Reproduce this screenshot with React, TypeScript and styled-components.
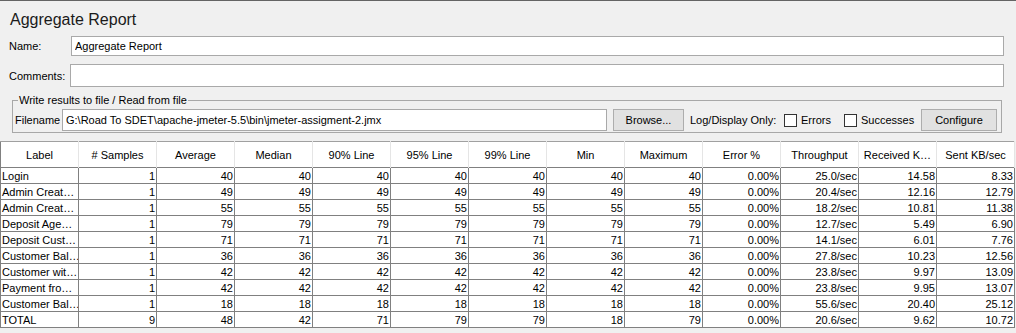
import React from 'react';
import styled, {createGlobalStyle} from 'styled-components';

const GlobalStyle = createGlobalStyle`
  html, body {
    margin: 0;
    padding: 0;
    background: #f0f0f0;
  }
  body {
    font-family: "Liberation Sans", Arial, sans-serif;
    font-size: 11px;
    color: #000;
  }
`;

const columns = [
  'Label',
  '# Samples',
  'Average',
  'Median',
  '90% Line',
  '95% Line',
  '99% Line',
  'Min',
  'Maximum',
  'Error %',
  'Throughput',
  'Received K…',
  'Sent KB/sec',
];

const rows: string[][] = [
  ['Login', '1', '40', '40', '40', '40', '40', '40', '40', '0.00%', '25.0/sec', '14.58', '8.33'],
  ['Admin Creat…', '1', '49', '49', '49', '49', '49', '49', '49', '0.00%', '20.4/sec', '12.16', '12.79'],
  ['Admin Creat…', '1', '55', '55', '55', '55', '55', '55', '55', '0.00%', '18.2/sec', '10.81', '11.38'],
  ['Deposit Age…', '1', '79', '79', '79', '79', '79', '79', '79', '0.00%', '12.7/sec', '5.49', '6.90'],
  ['Deposit Cust…', '1', '71', '71', '71', '71', '71', '71', '71', '0.00%', '14.1/sec', '6.01', '7.76'],
  ['Customer Bal…', '1', '36', '36', '36', '36', '36', '36', '36', '0.00%', '27.8/sec', '10.23', '12.56'],
  ['Customer wit…', '1', '42', '42', '42', '42', '42', '42', '42', '0.00%', '23.8/sec', '9.97', '13.09'],
  ['Payment fro…', '1', '42', '42', '42', '42', '42', '42', '42', '0.00%', '23.8/sec', '9.95', '13.07'],
  ['Customer Bal…', '1', '18', '18', '18', '18', '18', '18', '18', '0.00%', '55.6/sec', '20.40', '25.12'],
  ['TOTAL', '9', '48', '42', '71', '79', '79', '18', '79', '0.00%', '20.6/sec', '9.62', '10.72'],
];

const App = () => {
  return (
    <Page>
      <GlobalStyle />
      <Form>
        <Title>Aggregate Report</Title>
        <FieldRow>
          <Label width={62}>Name:</Label>
          <TextBox height={20} defaultValue="Aggregate Report" />
        </FieldRow>
        <FieldRow top={8}>
          <Label width={61}>Comments:</Label>
          <TextBox height={23} />
        </FieldRow>
        <FileGroup>
          <Legend>Write results to file / Read from file</Legend>
          <FileRow>
            <Label width={47}>Filename</Label>
            <TextBox height={22} defaultValue="G:\Road To SDET\apache-jmeter-5.5\bin\jmeter-assigment-2.jmx" />
            <Button width={71} left={6}>Browse...</Button>
            <InlineText width={94} left={6}>Log/Display Only:</InlineText>
            <CheckOption width={60}>
              <Box />
              Errors
            </CheckOption>
            <CheckOption width={77}>
              <Box />
              Successes
            </CheckOption>
            <Button width={76} left={0}>Configure</Button>
          </FileRow>
        </FileGroup>
      </Form>
      <Table>
        <colgroup>
          {columns.map(c => (
            <col key={c} style={{width: 78}} />
          ))}
        </colgroup>
        <thead>
          <tr>
            {columns.map(c => (
              <Th key={c}>{c}</Th>
            ))}
          </tr>
        </thead>
        <tbody>
          {rows.map((r, idx) => (
            <tr key={`${r[0]}-${idx}`}>
              {r.map((cell, i) => (
                <Td key={i} align={i === 0 ? 'left' : 'right'}>
                  {cell}
                </Td>
              ))}
            </tr>
          ))}
        </tbody>
      </Table>
    </Page>
  );
};

export default App;

const Page = styled.div`
  width: 1016px;
  height: 333px;
  border-top: 1px solid #646464;
  box-sizing: border-box;
  overflow: hidden;
`;

const Form = styled.div`
  padding: 9px 12px 0 9px;
  display: flex;
  flex-direction: column;
`;

const Title = styled.div`
  font-size: 16px;
  line-height: 20px;
  height: 20px;
  padding-left: 1px;
  color: #1a1a1a;
`;

const FieldRow = styled.div<{top?: number}>`
  display: flex;
  align-items: center;
  margin-top: ${p => p.top ?? 6}px;
`;

const Label = styled.span<{width: number}>`
  width: ${p => p.width}px;
  flex: none;
  line-height: 14px;
`;

const TextBox = styled.input<{height: number}>`
  flex: 1;
  min-width: 0;
  height: ${p => p.height}px;
  box-sizing: border-box;
  border: 1px solid #a9a9a9;
  background: #fff;
  font-family: "Liberation Sans", Arial, sans-serif;
  font-size: 11px;
  color: #000;
  padding: 0 3px;
  margin: 0;
  outline: none;
`;

const FileGroup = styled.fieldset`
  margin: 6px 2px 0 3px;
  padding: 2px 4px 1px 2px;
  border: 1px solid #a8a8a8;
`;

const Legend = styled.legend`
  margin-left: 3px;
  padding: 0 1px;
  font-size: 11px;
  line-height: 14px;
`;

const FileRow = styled.div`
  display: flex;
  align-items: center;
`;

const Button = styled.div<{width: number; left: number}>`
  width: ${p => p.width}px;
  height: 22px;
  margin-left: ${p => p.left}px;
  flex: none;
  box-sizing: border-box;
  border: 1px solid #adadad;
  background: #e1e1e1;
  display: flex;
  align-items: center;
  justify-content: center;
`;

const InlineText = styled.span<{width: number; left: number}>`
  width: ${p => p.width}px;
  margin-left: ${p => p.left}px;
  flex: none;
`;

const CheckOption = styled.span<{width: number}>`
  width: ${p => p.width}px;
  display: flex;
  align-items: center;
  gap: 4px;
  flex: none;
`;

const Box = styled.span`
  width: 13px;
  height: 13px;
  box-sizing: border-box;
  border: 1px solid #333;
  background: #fff;
`;

const Table = styled.table`
  margin-top: 8px;
  width: 1014px;
  table-layout: fixed;
  border-collapse: collapse;
  background: #fff;
  border-left: 1px solid #808080;
`;

const Th = styled.th`
  height: 25px;
  padding: 0 2px;
  font-weight: normal;
  font-size: 11px;
  text-align: center;
  background: #fff;
  border-top: 1px solid #a0a0a0;
  border-right: 1px solid #e5e5e5;
  white-space: nowrap;
  overflow: hidden;
`;

const Td = styled.td<{align: 'left' | 'right'}>`
  height: 15px;
  padding: 0 1px;
  line-height: 14px;
  font-size: 11px;
  text-align: ${p => p.align};
  border: 1px solid #808080;
  white-space: nowrap;
  overflow: hidden;
`;
